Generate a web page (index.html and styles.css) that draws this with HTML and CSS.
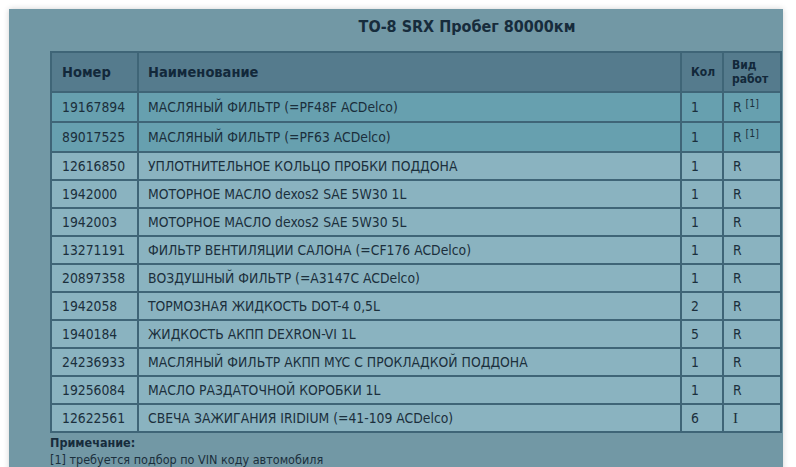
FILE: index.html
```html
<!DOCTYPE html>
<html lang="ru">
<head>
<meta charset="utf-8">
<title>ТО-8 SRX</title>
<link rel="stylesheet" href="styles.css">
</head>
<body>
<div class="panel">
  <h1 class="title">ТО-8 SRX Пробег 80000км</h1>
  <table class="parts">
    <thead>
      <tr>
        <th class="c-num">Номер</th>
        <th class="c-name">Наименование</th>
        <th class="c-qty small">Кол</th>
        <th class="c-type small">Вид<br>работ</th>
      </tr>
    </thead>
    <tbody>
      <tr class="hl tall"><td>19167894</td><td>МАСЛЯНЫЙ ФИЛЬТР (=PF48F ACDelco)</td><td>1</td><td>R <sup>[1]</sup></td></tr>
      <tr class="hl tall"><td>89017525</td><td>МАСЛЯНЫЙ ФИЛЬТР (=PF63 ACDelco)</td><td>1</td><td>R <sup>[1]</sup></td></tr>
      <tr><td>12616850</td><td>УПЛОТНИТЕЛЬНОЕ КОЛЬЦО ПРОБКИ ПОДДОНА</td><td>1</td><td>R</td></tr>
      <tr><td>1942000</td><td>МОТОРНОЕ МАСЛО dexos2 SAE 5W30 1L</td><td>1</td><td>R</td></tr>
      <tr><td>1942003</td><td>МОТОРНОЕ МАСЛО dexos2 SAE 5W30 5L</td><td>1</td><td>R</td></tr>
      <tr><td>13271191</td><td>ФИЛЬТР ВЕНТИЛЯЦИИ САЛОНА (=CF176 ACDelco)</td><td>1</td><td>R</td></tr>
      <tr><td>20897358</td><td>ВОЗДУШНЫЙ ФИЛЬТР (=A3147C ACDelco)</td><td>1</td><td>R</td></tr>
      <tr><td>1942058</td><td>ТОРМОЗНАЯ ЖИДКОСТЬ DOT-4 0,5L</td><td>2</td><td>R</td></tr>
      <tr><td>1940184</td><td>ЖИДКОСТЬ АКПП DEXRON-VI 1L</td><td>5</td><td>R</td></tr>
      <tr><td>24236933</td><td>МАСЛЯНЫЙ ФИЛЬТР АКПП MYC С ПРОКЛАДКОЙ ПОДДОНА</td><td>1</td><td>R</td></tr>
      <tr><td>19256084</td><td>МАСЛО РАЗДАТОЧНОЙ КОРОБКИ 1L</td><td>1</td><td>R</td></tr>
      <tr><td>12622561</td><td>СВЕЧА ЗАЖИГАНИЯ IRIDIUM (=41-109 ACDelco)</td><td>6</td><td class="serif">I</td></tr>
    </tbody>
  </table>
  <div class="note">
    <div class="note-title">Примечание:</div>
    <div class="note-text">[1] требуется подбор по VIN коду автомобиля</div>
  </div>
</div>
</body>
</html>
```

FILE: styles.css
```css
html, body {
  margin: 0;
  padding: 0;
  background: #ffffff;
}
body {
  font-family: "DejaVu Sans Condensed", "DejaVu Sans", sans-serif;
  color: #1b2f3c;
  overflow: hidden;
}
.panel {
  margin: 9px 13px 0 9px;
  height: 480px;
  background: #7298a5;
  box-shadow: 0 0 6px rgba(0, 0, 0, 0.18);
  padding: 8px 1px 0 41px;
  box-sizing: border-box;
}
.title {
  margin: 0;
  padding-left: 102px;
  text-align: center;
  font-size: 16px;
  line-height: 20px;
  height: 20px;
  margin-bottom: 14px;
  font-weight: bold;
  color: #172c3c;
}
.parts {
  width: 732px;
  border-collapse: collapse;
  font-size: 13.8px;
}
.parts th, .parts td {
  border: 2px solid #3f6577;
  text-align: left;
  padding: 0 0 0 9px;
  vertical-align: middle;
}
.parts th {
  background: #557b8d;
  color: #12283a;
  height: 38px;
  font-size: 14.5px;
  font-weight: bold;
}
.parts th.small {
  font-size: 12px;
  line-height: 14px;
}
.parts th.c-num {
  padding-left: 10px;
}
.parts th.c-type {
  padding-left: 8px;
}
.parts td {
  height: 26px;
  background: #8ab3c0;
}
.parts td:first-child {
  padding-left: 10px;
}
.parts tr.hl td {
  background: #67a0af;
}
.parts tr.tall td {
  height: 28px;
}
.c-num { width: 75px; }
.c-qty { width: 31px; }
.c-type { width: 48px; }
sup {
  font-size: 10.5px;
  line-height: 0;
  vertical-align: 5px;
}
.serif {
  font-family: "Liberation Serif", serif;
  font-size: 15px;
}
.note {
  padding-top: 1px;
  font-size: 12.5px;
  line-height: 17px;
}
.note-title {
  font-weight: bold;
  color: #172c3c;
}
.note-text {
  color: #1b2f3c;
}
```
